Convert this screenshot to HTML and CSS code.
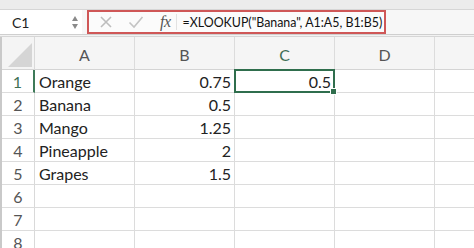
FILE: index.html
```html
<!DOCTYPE html>
<html>
<head>
<meta charset="utf-8">
<link rel="stylesheet" href="styles.css">
</head>
<body>
<div class="app">
  <div class="topstrip"></div>
  <div class="toolbar">
    <div class="namebox">
      <span class="name">C1</span>
      <span class="spin"><span class="up"></span><span class="down"></span></span>
    </div>
    <div class="gap"></div>
    <div class="formula">
      <span class="ico x">
        <svg width="14" height="14" viewBox="0 0 14 14"><path d="M2 2 L12 12 M12 2 L2 12" stroke="#bdbdbd" stroke-width="1.6" fill="none"/></svg>
      </span>
      <span class="ico check">
        <svg width="16" height="14" viewBox="0 0 16 14"><path d="M1.5 7.5 L6 12 L14.5 2" stroke="#c4c4c4" stroke-width="1.6" fill="none"/></svg>
      </span>
      <span class="fx">fx</span>
      <span class="sep"></span>
      <span class="ftext">=XLOOKUP("Banana", A1:A5, B1:B5)</span>
    </div>
  </div>
  <div class="divider"></div>
  <div class="sheet">
    <div class="grid">
      <div class="corner"><span class="tri"></span></div>
      <div class="ch">A</div>
      <div class="ch">B</div>
      <div class="ch sel">C</div>
      <div class="ch">D</div>
      <div class="ch last"></div>

      <div class="rh sel">1</div>
      <div class="c txt">Orange</div>
      <div class="c num">0.75</div>
      <div class="c num">0.5</div>
      <div class="c"></div>
      <div class="c last"></div>

      <div class="rh">2</div>
      <div class="c txt">Banana</div>
      <div class="c num">0.5</div>
      <div class="c"></div>
      <div class="c"></div>
      <div class="c last"></div>

      <div class="rh">3</div>
      <div class="c txt">Mango</div>
      <div class="c num">1.25</div>
      <div class="c"></div>
      <div class="c"></div>
      <div class="c last"></div>

      <div class="rh">4</div>
      <div class="c txt">Pineapple</div>
      <div class="c num">2</div>
      <div class="c"></div>
      <div class="c"></div>
      <div class="c last"></div>

      <div class="rh">5</div>
      <div class="c txt">Grapes</div>
      <div class="c num">1.5</div>
      <div class="c"></div>
      <div class="c"></div>
      <div class="c last"></div>

      <div class="rh">6</div>
      <div class="c"></div><div class="c"></div><div class="c"></div><div class="c"></div><div class="c last"></div>

      <div class="rh">7</div>
      <div class="c"></div><div class="c"></div><div class="c"></div><div class="c"></div><div class="c last"></div>

      <div class="rh">8</div>
      <div class="c"></div><div class="c"></div><div class="c"></div><div class="c"></div><div class="c last"></div>
    </div>
    <div class="selection"><span class="handle"></span></div>
  </div>
</div>
</body>
</html>
```
FILE: styles.css
```css
html, body {
  margin: 0;
  padding: 0;
  background: #ffffff;
}
body {
  width: 474px;
  height: 248px;
  overflow: hidden;
  font-family: Lato, "Open Sans", "Liberation Sans", sans-serif;
}
.app {
  display: flex;
  flex-direction: column;
  width: 474px;
  height: 248px;
}
.topstrip {
  height: 9px;
  background: #ececec;
  border-bottom: 1px solid #d6d6d6;
  flex: none;
}
.toolbar {
  height: 24px;
  display: flex;
  background: #f7f7f7;
  flex: none;
}
.namebox {
  width: 82px;
  background: #ffffff;
  display: flex;
  align-items: center;
  justify-content: space-between;
  padding: 0 4px 0 12px;
  box-sizing: border-box;
}
.name {
  font-size: 14px;
  color: #222;
}
.spin {
  display: flex;
  flex-direction: column;
  gap: 3px;
  align-items: center;
}
.up {
  width: 0; height: 0;
  border-left: 3.5px solid transparent;
  border-right: 3.5px solid transparent;
  border-bottom: 5px solid #8a8a8a;
}
.down {
  width: 0; height: 0;
  border-left: 3.5px solid transparent;
  border-right: 3.5px solid transparent;
  border-top: 5px solid #8a8a8a;
}
.gap {
  width: 5px;
}
.formula {
  width: 299px;
  height: 24px;
  box-sizing: border-box;
  border: 2px solid #cf5757;
  background: #fbfbfb;
  display: flex;
  align-items: center;
  padding-left: 10px;
  overflow: hidden;
}
.ico {
  display: flex;
  align-items: center;
}
.x { margin-right: 15px; }
.check { margin-right: 16px; }
.fx {
  font-family: "Liberation Serif", "DejaVu Serif", serif;
  font-style: italic;
  font-size: 16px;
  color: #555;
  letter-spacing: -0.5px;
}
.sep {
  width: 1px;
  height: 16px;
  background: #e2e2e2;
  margin: 0 6px 0 5px;
}
.ftext {
  font-size: 12.4px;
  color: #111;
  white-space: nowrap;
}
.divider {
  height: 3px;
  box-sizing: border-box;
  border-top: 1px solid #cfcfcf;
  border-bottom: 1px solid #d6d6d6;
  background: #f2f2f2;
  flex: none;
}
.sheet {
  position: relative;
  flex: 1;
  overflow: hidden;
  border-left: 2px solid #c9c9c9;
}
.grid {
  display: grid;
  grid-template-columns: 33px 100px 100px 100px 100px 1fr;
  grid-template-rows: 33px repeat(8, 23px);
}
.corner {
  background: #f4f4f4;
  border-right: 1px solid #d9d9d9;
  border-bottom: 1px solid #d4d4d4;
  position: relative;
}
.tri {
  position: absolute;
  right: 2px;
  bottom: 2px;
  width: 0; height: 0;
  border-left: 24px solid transparent;
  border-bottom: 24px solid #d5d5d5;
}
.ch {
  background: #f5f5f5;
  border-right: 1px solid #dcdcdc;
  border-bottom: 1px solid #d4d4d4;
  display: flex;
  align-items: center;
  justify-content: center;
  font-size: 16px;
  color: #555;
  padding-top: 2px;
}
.ch.sel {
  color: #3e6f55;
}
.ch.last, .c.last {
  border-right: none;
}
.rh {
  background: #ffffff;
  border-right: 1px solid #d9d9d9;
  border-bottom: 1px solid #dcdcdc;
  display: flex;
  align-items: center;
  justify-content: center;
  font-size: 16px;
  color: #555;
}
.rh.sel {
  color: #3e6f55;
  border-right: 2px solid #3e7a59;
}
.c {
  border-right: 1px solid #dcdcdc;
  border-bottom: 1px solid #dcdcdc;
  display: flex;
  align-items: center;
  font-size: 16px;
  color: #222;
  white-space: nowrap;
}
.txt {
  padding-left: 4px;
}
.num {
  justify-content: flex-end;
  padding-right: 3px;
}
.selection {
  position: absolute;
  left: 232px;
  top: 32px;
  width: 101px;
  height: 24px;
  border: 2px solid #2f6e4d;
  box-sizing: border-box;
}
.handle {
  position: absolute;
  right: -4px;
  bottom: -4px;
  width: 5px;
  height: 5px;
  background: #2f6e4d;
  border: 1px solid #ffffff;
}
```
